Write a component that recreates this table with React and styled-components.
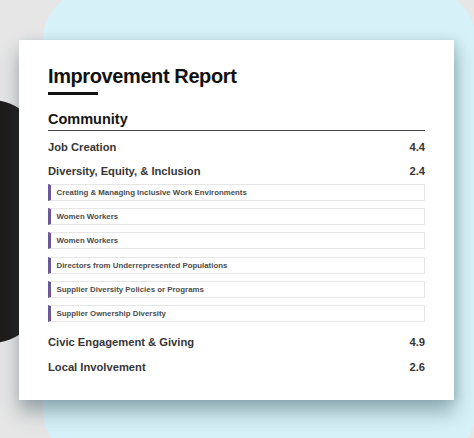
import React from "react";
import styled, { createGlobalStyle } from "styled-components";

const GlobalStyle = createGlobalStyle`
  html, body {
    margin: 0;
    padding: 0;
    background: #e6e6e6;
    font-family: "Liberation Sans", Arial, Helvetica, sans-serif;
  }
`;

const items = [
  { label: "Job Creation", score: "4.4" },
  {
    label: "Diversity, Equity, & Inclusion",
    score: "2.4",
    subs: [
      "Creating & Managing Inclusive Work Environments",
      "Women Workers",
      "Women Workers",
      "Directors from Underrepresented Populations",
      "Supplier Diversity Policies or Programs",
      "Supplier Ownership Diversity",
    ],
  },
  { label: "Civic Engagement & Giving", score: "4.9" },
  { label: "Local Involvement", score: "2.6" },
];

const App = () => {
  return (
    <Stage>
      <GlobalStyle />
      <Backdrop />
      <Blob />
      <Card>
        <Title>Improvement Report</Title>
        <TitleBar />
        <Section>Community</Section>
        <List>
          {items.map((item) => (
            <React.Fragment key={item.label}>
              <Row>
                <span>{item.label}</span>
                <span>{item.score}</span>
              </Row>
              {item.subs && (
                <SubList>
                  {item.subs.map((s, i) => (
                    <SubItem key={i}>{s}</SubItem>
                  ))}
                </SubList>
              )}
            </React.Fragment>
          ))}
        </List>
      </Card>
    </Stage>
  );
};

export default App;

const Stage = styled.div`
  position: relative;
  width: 474px;
  height: 438px;
  overflow: hidden;
  background: #e6e6e6;
  padding-top: 40px;
  box-sizing: border-box;
`;

const Backdrop = styled.div`
  position: absolute;
  left: 43px;
  top: -10px;
  width: 433px;
  height: 470px;
  border-radius: 50px;
  background: #d6f1f7;
`;

const Blob = styled.div`
  position: absolute;
  left: -80px;
  top: 100px;
  width: 120px;
  height: 243px;
  border-radius: 48px;
  background: #1f1b1b;
`;

const Card = styled.div`
  position: relative;
  margin: 0 20px 0 19px;
  height: 360px;
  box-sizing: border-box;
  background: #ffffff;
  padding: 24px 29px 0 29px;
  box-shadow: 0 12px 18px rgba(40, 70, 80, 0.4), 4px 0 8px rgba(60, 110, 120, 0.15);
`;

const Title = styled.h1`
  margin: 0;
  font-size: 20px;
  line-height: 24px;
  font-weight: 700;
  letter-spacing: -0.4px;
  color: #111;
`;

const TitleBar = styled.div`
  width: 50px;
  height: 3px;
  margin-top: 4px;
  background: #111;
`;

const Section = styled.h2`
  margin: 14.5px 0 0 0;
  font-size: 14.5px;
  line-height: 18px;
  font-weight: 700;
  color: #151515;
  padding-bottom: 2.5px;
  border-bottom: 1px solid #4a4a4a;
`;

const List = styled.div`
  display: flex;
  flex-direction: column;
  margin-top: 3.5px;
`;

const Row = styled.div`
  display: flex;
  justify-content: space-between;
  align-items: center;
  height: 24.6px;
  font-size: 11.2px;
  font-weight: 700;
  color: #363636;
`;

const SubList = styled.div`
  display: flex;
  flex-direction: column;
  gap: 7.3px;
  margin-bottom: 7.5px;
`;

const SubItem = styled.div`
  display: flex;
  align-items: center;
  height: 17px;
  box-sizing: border-box;
  border: 1px solid #e6e6e6;
  border-left: 3px solid #6c5898;
  padding-left: 5.5px;
  font-size: 7.85px;
  font-weight: 700;
  color: #4c4c4c;
`;
